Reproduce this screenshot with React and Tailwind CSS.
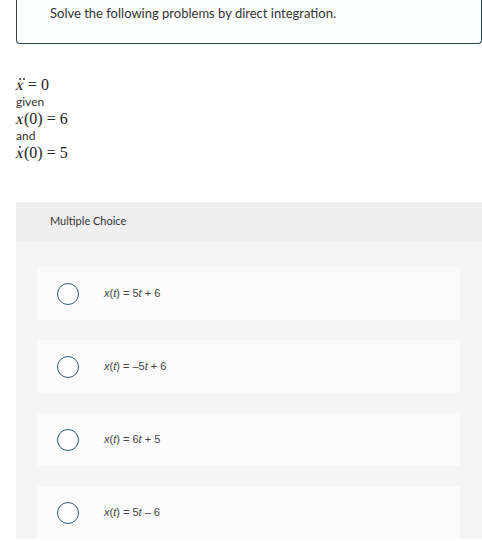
const options = [
  { coef: '5', rest: '+ 6' },
  { coef: '–5', rest: '+ 6' },
  { coef: '6', rest: '+ 5' },
  { coef: '5', rest: '– 6' },
];

const MathLine = ({ children }) => (
  <div className="h-[17px] leading-[17px] text-[16px] text-[#222] font-['Liberation_Serif',serif]">
    {children}
  </div>
);

// serif italic face is missing, so slant the upright x
const MathX = () => <span className="inline-block -skew-x-[14deg]">x</span>;

const Dotted = ({ dots }) => (
  <span className="relative inline-block">
    <MathX />
    <span className="absolute left-[3px] top-[2px] flex gap-[2px]">
      <span className="w-[2px] h-[2px] rounded-full bg-[#333]"></span>
      {dots === 2 && <span className="w-[2px] h-[2px] rounded-full bg-[#333]"></span>}
    </span>
  </span>
);

const App = () => {
  return (
    <div className="w-[482px] h-[541px] overflow-hidden bg-white text-[#333] font-['Lato','Open_Sans',sans-serif]">
      <div className="ml-4 h-[44px] border-x border-b border-[#2b4455] rounded-b-[4px] bg-[#fdfefe] pl-[33px] pt-[5px]">
        <p className="text-[13px] leading-4 text-[#333]">Solve the following problems by direct integration.</p>
      </div>

      <div className="ml-4 mt-[32px] flex flex-col">
        <MathLine>
          <Dotted dots={2} /> = 0
        </MathLine>
        <div className="h-[17px] leading-[17px] text-[12px] text-[#333]">given</div>
        <MathLine>
          <MathX />(0) = 6
        </MathLine>
        <div className="h-[17px] leading-[17px] text-[12px] text-[#333]">and</div>
        <MathLine>
          <Dotted dots={1} />(0) = 5
        </MathLine>
      </div>

      <div className="ml-4 mt-[41px] bg-[#f5f5f5]">
        <div className="h-[39px] bg-[#efefef] pl-[34px] flex items-center">
          <span className="text-[11px] text-[#333]">Multiple Choice</span>
        </div>
        <div className="pt-[26px] pl-[21px] pr-[22px] flex flex-col gap-5">
          {options.map((opt, i) => (
            <div key={i} className="h-[53px] bg-[#fbfbfb] flex items-center pl-5">
              <span className="w-[22px] h-[22px] rounded-full border-[1.5px] border-[#2c5b6f] bg-white shrink-0"></span>
              <span className="ml-[25px] text-[11px] text-[#444] font-['Liberation_Sans',sans-serif]">
                <span className="italic">x</span>(<span className="italic">t</span>) = {opt.coef}<span className="italic">t</span> {opt.rest}
              </span>
            </div>
          ))}
        </div>
      </div>
    </div>
  );
};

export default App;
